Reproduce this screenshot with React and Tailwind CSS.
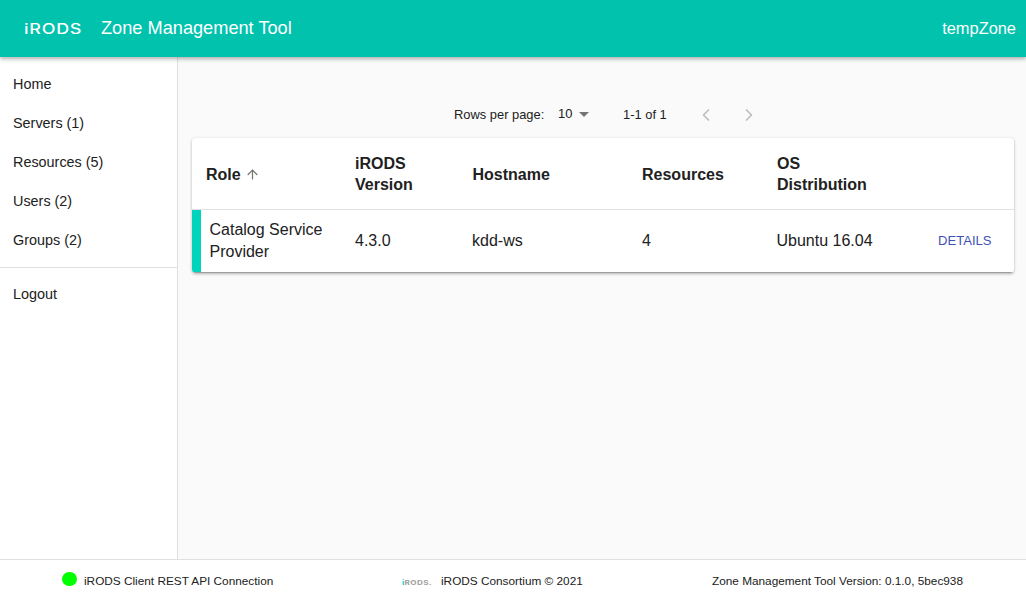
import React from "react";
import { ArrowUp, ChevronLeft, ChevronRight } from "lucide-react";

const navTop = ["Home", "Servers (1)", "Resources (5)", "Users (2)", "Groups (2)"];

const Sidebar = () => (
  <aside className="w-[178px] shrink-0 bg-white border-r border-[#e0e0e0] text-[14.4px] leading-[24px] text-[#212121]">
    <nav className="pt-[8px]">
      {navTop.map((item) => (
        <div key={item} className="h-[39px] pl-[13px] pt-[7px]">{item}</div>
      ))}
    </nav>
    <div className="mt-[7px] border-t border-[#e0e0e0] pt-[7px]">
      <div className="h-[39px] pl-[13px] pt-[7px]">Logout</div>
    </div>
  </aside>
);

const Pagination = () => (
  <div className="h-[49px] pt-[2px] flex items-center text-[12.9px] text-[#212121] pl-[276px] whitespace-nowrap">
    <span className="w-[104px]">Rows per page:</span>
    <span className="w-[18px] -mt-[2px]">10</span>
    <svg className="ml-[3px]" width="10" height="5" viewBox="0 0 10 5"><path d="M0 0h10L5 5z" fill="#757575" /></svg>
    <span className="ml-[34px] w-[44px]">1-1 of 1</span>
    <ChevronLeft className="ml-[29px] text-[#bdbdbd]" size={20} />
    <ChevronRight className="ml-[23px] text-[#bdbdbd]" size={20} />
  </div>
);

const RolesTable = () => (
  <div className="ml-[14px] mr-[12px] bg-white rounded-[4px] shadow-[0_1px_3px_rgba(0,0,0,0.3)] overflow-hidden text-[16px] text-[#212121]">
    <div className="h-[72px] flex items-center font-bold leading-[21px] border-b border-[#e0e0e0]">
      <div className="w-[163px] pl-[14px] pt-[2px] flex items-center gap-[4px]">
        Role <ArrowUp size={15} className="text-[#757575]" />
      </div>
      <div className="w-[117px]">iRODS<br />Version</div>
      <div className="w-[170px] pl-[0.5px] pt-[2px]">Hostname</div>
      <div className="w-[135px] pt-[2px]">Resources</div>
      <div className="w-[150px]">OS<br />Distribution</div>
    </div>
    <div className="h-[63px] flex items-center border-b border-[#9e9e9e] leading-[22px]">
      <div className="w-[9px] h-full bg-[#00d4bd] shrink-0" />
      <div className="w-[154px] pl-[8.5px]">Catalog Service Provider</div>
      <div className="w-[117px]">4.3.0</div>
      <div className="w-[170px]">kdd-ws</div>
      <div className="w-[134.5px]">4</div>
      <div className="w-[161.5px]">Ubuntu 16.04</div>
      <div className="text-[13.1px] text-[#3f51b5]">DETAILS</div>
    </div>
  </div>
);

export default function App() {
  return (
    <div className="w-[1026px] h-[603px] flex flex-col overflow-hidden bg-white font-['Liberation_Sans',sans-serif]">
      <header className="relative z-10 h-[57px] shrink-0 bg-[#00c2ad] text-white flex items-center shadow-[0_2px_4px_rgba(0,0,0,0.3)]">
        <span className="ml-[24px] w-[77px]">
          <span className="inline-block origin-left scale-x-[1.28] text-[14px] font-['Inter',sans-serif] font-medium tracking-[0.6px]">iRODS</span>
        </span>
        <span className="text-[18.2px]">Zone Management Tool</span>
        <span className="ml-auto mr-[10px] text-[16.4px]">tempZone</span>
      </header>
      <div className="flex flex-1 min-h-0">
        <Sidebar />
        <main className="flex-1 bg-[#fafafa] pt-[32px]">
          <Pagination />
          <RolesTable />
        </main>
      </div>
      <footer className="h-[44px] shrink-0 border-t border-[#e0e0e0] bg-white flex items-center text-[11.8px] text-[#212121]">
        <span className="ml-[62px] w-[15px] h-[14px] rounded-full bg-[#00ff00] -mt-[5px]" />
        <span className="ml-[7px] w-[318px]">iRODS Client REST API Connection</span>
        <span className="w-[39px]">
          <span className="inline-block origin-left scale-x-[1.25] text-[6.5px] font-['Inter',sans-serif] font-bold text-[#9e9e9e] tracking-[0.3px]">
            <span className="text-[#00d4bd]">i</span>RODS.
          </span>
        </span>
        <span className="w-[271px]">iRODS Consortium © 2021</span>
        <span>Zone Management Tool Version: 0.1.0, 5bec938</span>
      </footer>
    </div>
  );
}
